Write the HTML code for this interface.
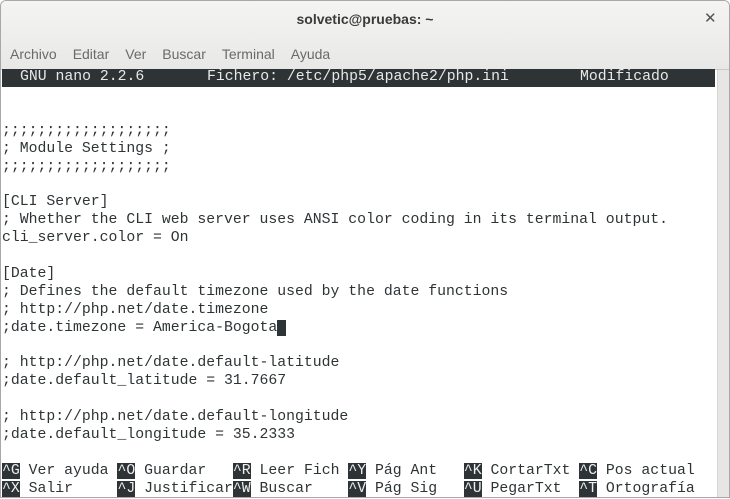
<!DOCTYPE html>
<html><head><style>
html,body{margin:0;padding:0;background:#fff;}
body{width:730px;height:498px;position:relative;overflow:hidden;font-family:"Liberation Sans","DejaVu Sans",sans-serif;}
.win{position:absolute;left:0;top:0;width:728px;height:496px;border:1px solid #a8a8a8;border-radius:6px 6px 0 0;overflow:hidden;background:#fff;}
.tb{position:absolute;left:0;top:0;width:728px;height:68px;background:linear-gradient(#f4f4f3,#e8e8e7);border-bottom:1px solid #c8c8c6;}
.title{position:absolute;top:10px;left:0;width:728px;text-align:center;font-size:14px;font-weight:bold;color:#3a3a3a;}
.x{position:absolute;top:8px;left:703px;font-size:15px;font-weight:bold;color:#555;}
.menu{position:absolute;top:45px;left:9px;font-size:14px;color:#6a6a6a;}
.menu span{margin-right:16px;}
.term{position:absolute;left:2px;top:69px;width:713px;font-family:"Liberation Mono","DejaVu Sans Mono",monospace;font-size:14.8px;line-height:17.9px;color:#2e3436;white-space:pre;}
.hd{background:#2e3436;color:#e8e8e8;height:17.9px;position:relative;}
.hd span{position:absolute;top:0;}
.k{background:#2e3436;color:#eee;}
.cur{background:#2e3436;}
.sb{position:absolute;left:716px;top:69px;width:11px;height:427px;background:#e6e6e4;border-left:1px solid #d4d4d2;}
</style></head><body>
<div class="win">
<div class="tb"><div class="title">solvetic@pruebas: ~</div><div class="x">✕</div>
<div class="menu"><span>Archivo</span><span>Editar</span><span>Ver</span><span>Buscar</span><span>Terminal</span><span>Ayuda</span></div></div>
<div class="sb"></div>
</div>
<div class="term"><div class="hd"><span style="left:18px">GNU nano 2.2.6</span><span style="left:205px">Fichero: /etc/php5/apache2/php.ini</span><span style="left:578px">Modificado</span></div>

;;;;;;;;;;;;;;;;;;;
; Module Settings ;
;;;;;;;;;;;;;;;;;;;

[CLI Server]
; Whether the CLI web server uses ANSI color coding in its terminal output.
cli_server.color = On

[Date]
; Defines the default timezone used by the date functions
; http://php.net/date.timezone
;date.timezone = America-Bogota<span class="cur"> </span>

; http://php.net/date.default-latitude
;date.default_latitude = 31.7667

; http://php.net/date.default-longitude
;date.default_longitude = 35.2333

<span class="k">^G</span> Ver ayuda <span class="k">^O</span> Guardar   <span class="k">^R</span> Leer Fich <span class="k">^Y</span> Pág Ant   <span class="k">^K</span> CortarTxt <span class="k">^C</span> Pos actual
<span class="k">^X</span> Salir     <span class="k">^J</span> Justificar<span class="k">^W</span> Buscar    <span class="k">^V</span> Pág Sig   <span class="k">^U</span> PegarTxt  <span class="k">^T</span> Ortografía</div>
</body></html>
